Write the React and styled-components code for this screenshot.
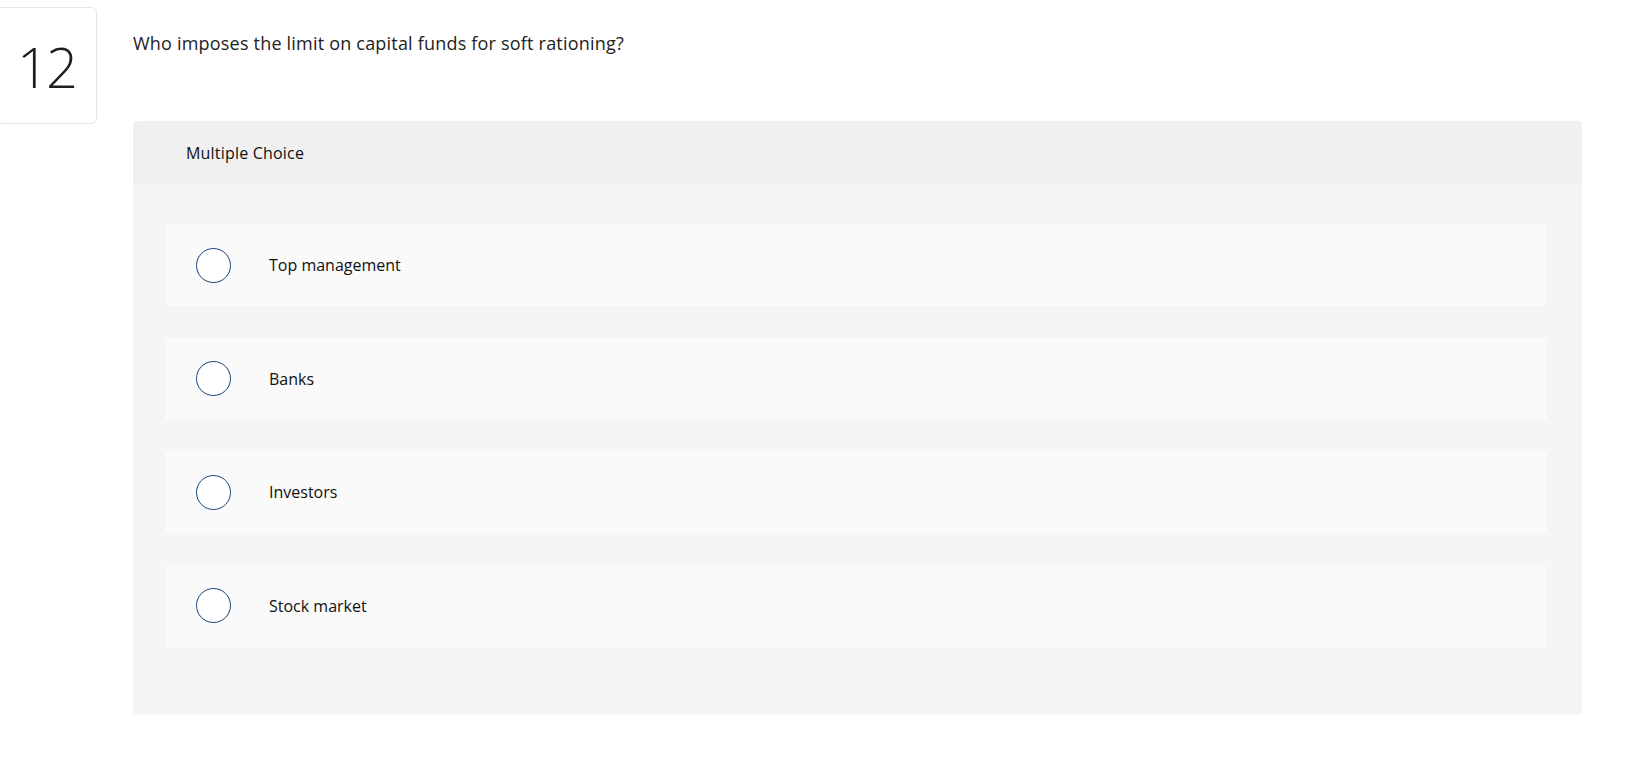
import React from 'react'
import styled, { createGlobalStyle } from 'styled-components'

const GlobalStyle = createGlobalStyle`
  html, body {
    margin: 0;
    padding: 0;
    background: #ffffff;
  }
  body {
    font-family: "Open Sans", Lato, Arial, sans-serif;
    color: #1a1a1a;
    overflow: hidden;
  }
`;

const Page = styled.div`
  display: flex;
  align-items: flex-start;
  width: 1637px;
  height: 771px;
`;

const NumberBox = styled.div`
  flex: none;
  display: flex;
  align-items: center;
  justify-content: center;
  box-sizing: border-box;
  width: 102px;
  height: 117px;
  margin: 7px 0 0 -5px;
  border: 1px solid #e6e6e6;
  border-radius: 6px;
  font-size: 56px;
  font-weight: 350;
  color: #1e1e1e;
  letter-spacing: -3px;
`;

const Main = styled.div`
  flex: none;
  width: 1449px;
  margin-left: 36px;
  padding-top: 32px;
`;

const Question = styled.p`
  margin: 0;
  font-size: 18px;
  line-height: 22px;
  letter-spacing: 0.2px;
  color: #222;
`;

const Card = styled.section`
  margin-top: 67px;
  background: #f5f5f5;
  border-radius: 4px;
  overflow: hidden;
`;

const CardHeader = styled.div`
  display: flex;
  align-items: center;
  height: 63px;
  padding-left: 53px;
  background: #f0f0f0;
  font-size: 16px;
  letter-spacing: 0.2px;
  color: #111;
`;

const Options = styled.ul`
  list-style: none;
  margin: 0;
  padding: 40px 35px 68px 32px;
  display: flex;
  flex-direction: column;
  gap: 31.5px;
`;

const Option = styled.li`
  display: flex;
  align-items: center;
  height: 82px;
  padding-left: 31px;
  background: #fafafa;
  border-radius: 4px;
  font-size: 16px;
  color: #111;
  cursor: pointer;
`;

const Radio = styled.span`
  flex: none;
  box-sizing: border-box;
  width: 35px;
  height: 35px;
  border: 1.5px solid #17457a;
  border-radius: 50%;
  background: #fff;
  margin-right: 38px;
`;

const answers = ['Top management', 'Banks', 'Investors', 'Stock market'];

export default function App() {
  return (
    <>
      <GlobalStyle />
      <Page>
        <NumberBox>12</NumberBox>
        <Main>
          <Question>Who imposes the limit on capital funds for soft rationing?</Question>
          <Card>
            <CardHeader>Multiple Choice</CardHeader>
            <Options>
              {answers.map(answer => (
                <Option key={answer}>
                  <Radio />
                  {answer}
                </Option>
              ))}
            </Options>
          </Card>
        </Main>
      </Page>
    </>
  )
}
